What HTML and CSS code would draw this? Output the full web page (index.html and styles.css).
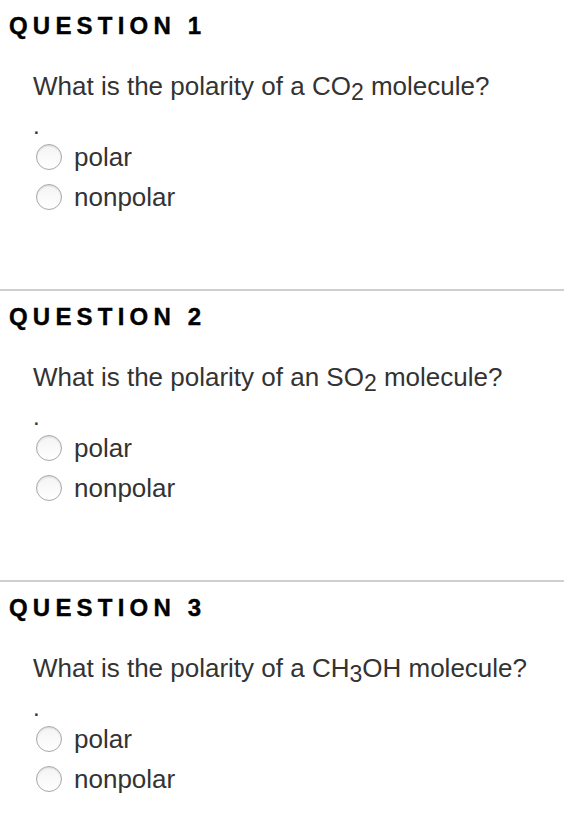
FILE: index.html
```html
<!DOCTYPE html>
<html>
<head>
<meta charset="utf-8">
<link rel="stylesheet" href="styles.css">
</head>
<body>
<div class="question">
  <h2 class="q-title">QUESTION 1</h2>
  <p class="q-text">What is the polarity of a CO<sub>2</sub> molecule?</p>
  <div class="dot">.</div>
  <div class="options">
    <label class="option"><span class="radio"></span><span class="label">polar</span></label>
    <label class="option"><span class="radio"></span><span class="label">nonpolar</span></label>
  </div>
</div>
<div class="question">
  <h2 class="q-title">QUESTION 2</h2>
  <p class="q-text">What is the polarity of an SO<sub>2</sub> molecule?</p>
  <div class="dot">.</div>
  <div class="options">
    <label class="option"><span class="radio"></span><span class="label">polar</span></label>
    <label class="option"><span class="radio"></span><span class="label">nonpolar</span></label>
  </div>
</div>
<div class="question">
  <h2 class="q-title">QUESTION 3</h2>
  <p class="q-text">What is the polarity of a CH<sub>3</sub>OH molecule?</p>
  <div class="dot">.</div>
  <div class="options">
    <label class="option"><span class="radio"></span><span class="label">polar</span></label>
    <label class="option"><span class="radio"></span><span class="label">nonpolar</span></label>
  </div>
</div>
</body>
</html>
```
FILE: styles.css
```css
html, body {
  margin: 0;
  padding: 0;
  background: #fff;
}
body {
  font-family: "Liberation Sans", Arial, sans-serif;
  width: 564px;
  overflow: hidden;
}
.question {
  padding: 12px 0 72px 0;
  border-bottom: 2px solid #cfcfcf;
}
.question:last-child {
  border-bottom: none;
}
.q-title {
  margin: 0;
  padding-left: 9px;
  font-size: 24px;
  line-height: 28px;
  font-weight: bold;
  letter-spacing: 5.2px;
  color: #000;
  -webkit-text-stroke: 0.4px #000;
}
.q-text {
  margin: 32px 0 0 0;
  padding-left: 33px;
  font-size: 26px;
  line-height: 28px;
  color: #333;
}
.q-text sub {
  font-size: 23px;
  line-height: 0;
  vertical-align: -5px;
}
.dot {
  margin-top: 25px;
  height: 12px;
  line-height: 2px;
  padding-left: 33px;
  font-size: 24px;
  color: #333;
}
.options {
  display: flex;
  flex-direction: column;
}
.option {
  display: flex;
  align-items: center;
  height: 40px;
  padding-left: 36px;
}
.radio {
  box-sizing: border-box;
  width: 26px;
  height: 26px;
  border-radius: 50%;
  border: 1px solid #a9a9a9;
  background: linear-gradient(#f4f4f4, #ffffff);
  box-shadow: inset 0 1px 2px rgba(0,0,0,0.12);
  flex: none;
}
.label {
  margin-left: 12px;
  font-size: 26px;
  line-height: 28px;
  color: #333;
}
```
